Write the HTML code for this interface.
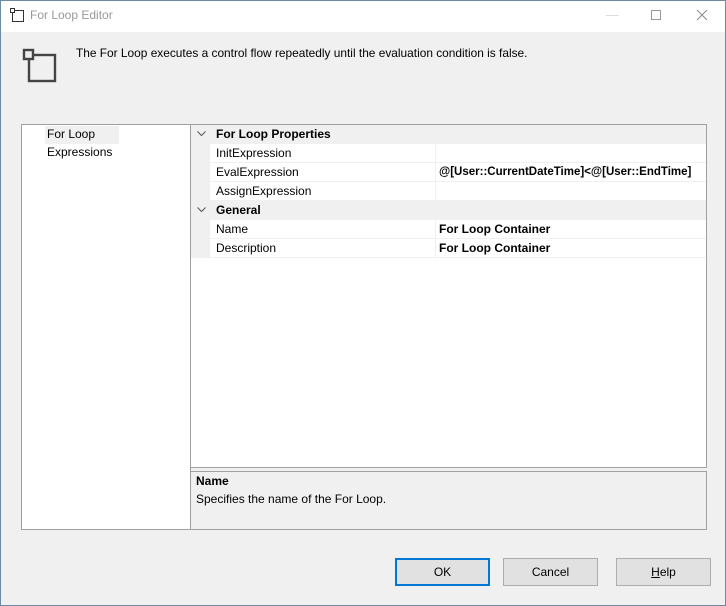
<!DOCTYPE html>
<html><head><style>
*{margin:0;padding:0;box-sizing:border-box}
body{width:726px;height:606px;font-family:"Segoe UI","Liberation Sans",sans-serif;font-size:12px;color:#000;background:#f0f0f0;position:relative;overflow:hidden}
.win{position:absolute;left:0;top:0;width:726px;height:606px;background:#f0f0f0}
.frame{position:absolute;left:0;top:0;width:726px;height:606px;border:1px solid #6d8aa3}
.title{position:absolute;left:0;top:0;width:726px;height:32px;background:#fff}
.abs{position:absolute}
.row{position:absolute;left:19px;width:496px;height:19px;line-height:18px;border-bottom:1px solid #f0f0f0;background:#fff;overflow:hidden}
.row .n{position:absolute;left:6px}
.row .v{position:absolute;left:225px;top:0;height:18px;border-left:1px solid #f0f0f0;padding-left:3px;font-weight:bold;width:271px;white-space:nowrap}
.cat{position:absolute;left:0;width:515px;height:19px;line-height:18px;background:#f0f0f0;font-weight:bold}
.btn{position:absolute;top:558px;width:95px;height:28px;background:#e1e1e1;border:1px solid #adadad;text-align:center;line-height:26px}
</style></head><body>
<div class="win">
<div class="title">
<svg class="abs" style="left:9px;top:7px" width="16" height="16"><rect x="3.5" y="3.5" width="11" height="11" fill="none" stroke="#333"/><rect x="1.5" y="1.5" width="4" height="4" fill="#fff" stroke="#333"/><line x1="6" y1="3.5" x2="9" y2="3.5" stroke="#333"/></svg>
<div class="abs" style="left:30px;top:8px;color:#999;font-size:12px">For Loop Editor</div>
<div class="abs" style="left:606px;top:15px;width:13px;height:1px;background:#ddd"></div>
<div class="abs" style="left:651px;top:10px;width:10px;height:10px;border:1px solid #999"></div>
<svg class="abs" style="left:696px;top:9px" width="12" height="12"><path d="M1 1L11 11M11 1L1 11" stroke="#888"/></svg>
</div>
<svg class="abs" style="left:22px;top:48px" width="40" height="40"><rect x="7" y="7" width="26" height="26" fill="none" stroke="#444" stroke-width="2.4"/><rect x="2" y="2" width="9" height="9" fill="#eee" stroke="#444" stroke-width="2.4"/><line x1="12" y1="7" x2="17" y2="7" stroke="#444" stroke-width="2"/></svg>
<div class="abs" style="left:76px;top:46px;font-size:11.9px">The For Loop executes a control flow repeatedly until the evaluation condition is false.</div>
<div class="abs" style="left:21px;top:124px;width:170px;height:406px;background:#fff;border:1px solid #a0a0a0">
<div class="abs" style="left:23px;top:1px;width:74px;height:18px;background:#f0f0f0"></div>
<div class="abs" style="left:25px;top:2px">For Loop</div>
<div class="abs" style="left:25px;top:20px">Expressions</div>
</div>
<div class="abs" style="left:190px;top:124px;width:517px;height:344px;background:#fff;border:1px solid #a0a0a0">
<div class="abs" style="left:0;top:0;width:19px;height:133px;background:#f0f0f0"></div>
<div class="cat" style="top:0"><svg class="abs" style="left:6px;top:6px" width="9" height="6"><path d="M0.5 0.5L4.5 4.5L8.5 0.5" fill="none" stroke="#555"/></svg><span class="abs" style="left:25px">For Loop Properties</span></div>
<div class="row" style="top:19px"><span class="n">InitExpression</span><span class="v"></span></div>
<div class="row" style="top:38px"><span class="n">EvalExpression</span><span class="v" style="font-size:11.5px">@[User::CurrentDateTime]&lt;@[User::EndTime]</span></div>
<div class="row" style="top:57px"><span class="n">AssignExpression</span><span class="v"></span></div>
<div class="cat" style="top:76px"><svg class="abs" style="left:6px;top:6px" width="9" height="6"><path d="M0.5 0.5L4.5 4.5L8.5 0.5" fill="none" stroke="#555"/></svg><span class="abs" style="left:25px">General</span></div>
<div class="row" style="top:95px"><span class="n">Name</span><span class="v">For Loop Container</span></div>
<div class="row" style="top:114px"><span class="n">Description</span><span class="v">For Loop Container</span></div>
</div>
<div class="abs" style="left:190px;top:471px;width:517px;height:59px;background:#f0f0f0;border:1px solid #a0a0a0">
<div class="abs" style="left:5px;top:2px;font-weight:bold">Name</div>
<div class="abs" style="left:5px;top:20px">Specifies the name of the For Loop.</div>
</div>
<div class="btn" style="left:395px;border:2px solid #0078d7;line-height:24px">OK</div>
<div class="btn" style="left:503px">Cancel</div>
<div class="btn" style="left:616px"><u>H</u>elp</div>
</div>
<div class="frame"></div>
</body></html>
